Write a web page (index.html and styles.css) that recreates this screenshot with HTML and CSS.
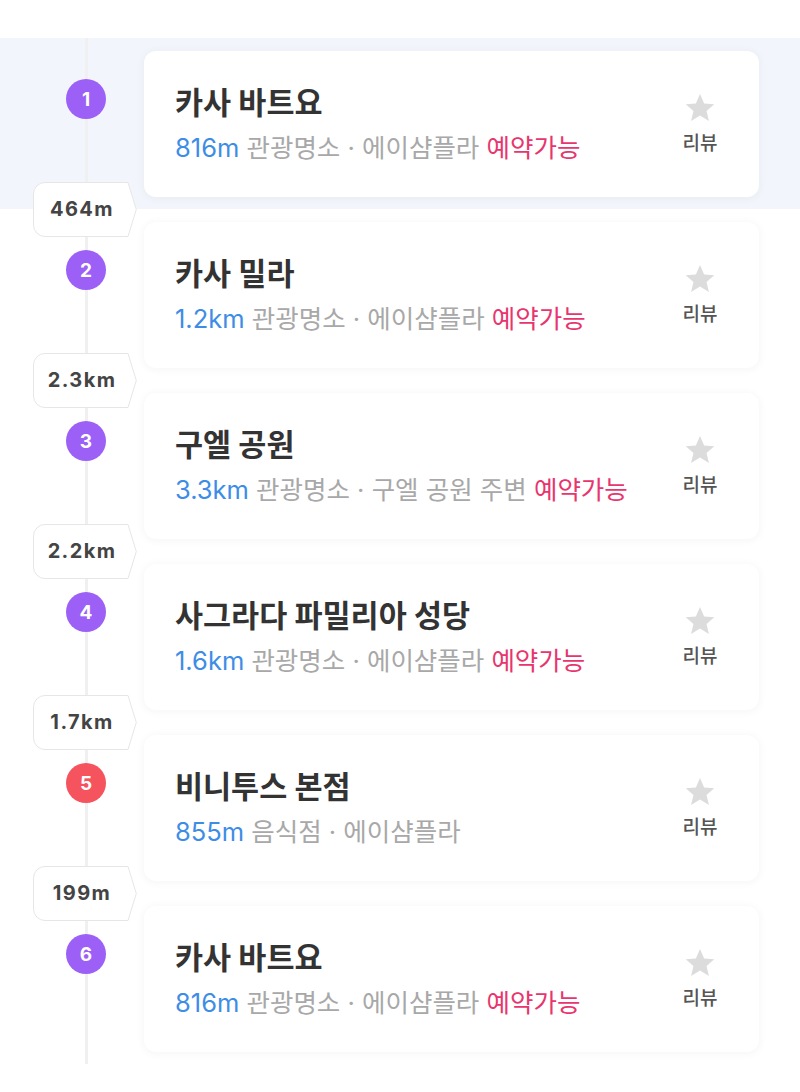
FILE: index.html
```html
<!DOCTYPE html>
<html lang="ko">
<head>
<meta charset="utf-8">
<title>코스</title>
<link rel="stylesheet" href="styles.css">
</head>
<body>
<div class="timeline">
  <div class="stop active">
    <div class="rail"><span class="num purple">1</span></div>
    <div class="card">
      <div class="info">
        <div class="title">카사 바트요</div>
        <div class="meta"><span class="dist">816m</span> 관광명소 · 에이샴플라 <span class="book">예약가능</span></div>
      </div>
      <div class="review"><svg class="star" viewBox="0 0 24 24"><path d="M12 1.5l3.1 7.1 7.6.6-5.8 5 1.8 7.5L12 17.7l-6.7 4 1.8-7.5-5.8-5 7.6-.6z"/></svg><span>리뷰</span></div>
    </div>
  </div>
  <div class="leg"><div class="pill"><svg viewBox="0 0 104 55" preserveAspectRatio="none"><path d="M12 .5H95L103.3 27.5 95 54.5H12A11.5 11.5 0 0 1 .5 43V12A11.5 11.5 0 0 1 12 .5Z"/></svg><span>464m</span></div></div>
  <div class="stop">
    <div class="rail"><span class="num purple">2</span></div>
    <div class="card">
      <div class="info">
        <div class="title">카사 밀라</div>
        <div class="meta"><span class="dist">1.2km</span> 관광명소 · 에이샴플라 <span class="book">예약가능</span></div>
      </div>
      <div class="review"><svg class="star" viewBox="0 0 24 24"><path d="M12 1.5l3.1 7.1 7.6.6-5.8 5 1.8 7.5L12 17.7l-6.7 4 1.8-7.5-5.8-5 7.6-.6z"/></svg><span>리뷰</span></div>
    </div>
  </div>
  <div class="leg"><div class="pill"><svg viewBox="0 0 104 55" preserveAspectRatio="none"><path d="M12 .5H95L103.3 27.5 95 54.5H12A11.5 11.5 0 0 1 .5 43V12A11.5 11.5 0 0 1 12 .5Z"/></svg><span>2.3km</span></div></div>
  <div class="stop">
    <div class="rail"><span class="num purple">3</span></div>
    <div class="card">
      <div class="info">
        <div class="title">구엘 공원</div>
        <div class="meta"><span class="dist">3.3km</span> 관광명소 · 구엘 공원 주변 <span class="book">예약가능</span></div>
      </div>
      <div class="review"><svg class="star" viewBox="0 0 24 24"><path d="M12 1.5l3.1 7.1 7.6.6-5.8 5 1.8 7.5L12 17.7l-6.7 4 1.8-7.5-5.8-5 7.6-.6z"/></svg><span>리뷰</span></div>
    </div>
  </div>
  <div class="leg"><div class="pill"><svg viewBox="0 0 104 55" preserveAspectRatio="none"><path d="M12 .5H95L103.3 27.5 95 54.5H12A11.5 11.5 0 0 1 .5 43V12A11.5 11.5 0 0 1 12 .5Z"/></svg><span>2.2km</span></div></div>
  <div class="stop">
    <div class="rail"><span class="num purple">4</span></div>
    <div class="card">
      <div class="info">
        <div class="title">사그라다 파밀리아 성당</div>
        <div class="meta"><span class="dist">1.6km</span> 관광명소 · 에이샴플라 <span class="book">예약가능</span></div>
      </div>
      <div class="review"><svg class="star" viewBox="0 0 24 24"><path d="M12 1.5l3.1 7.1 7.6.6-5.8 5 1.8 7.5L12 17.7l-6.7 4 1.8-7.5-5.8-5 7.6-.6z"/></svg><span>리뷰</span></div>
    </div>
  </div>
  <div class="leg"><div class="pill"><svg viewBox="0 0 104 55" preserveAspectRatio="none"><path d="M12 .5H95L103.3 27.5 95 54.5H12A11.5 11.5 0 0 1 .5 43V12A11.5 11.5 0 0 1 12 .5Z"/></svg><span>1.7km</span></div></div>
  <div class="stop">
    <div class="rail"><span class="num red">5</span></div>
    <div class="card">
      <div class="info">
        <div class="title">비니투스 본점</div>
        <div class="meta"><span class="dist">855m</span> 음식점 · 에이샴플라</div>
      </div>
      <div class="review"><svg class="star" viewBox="0 0 24 24"><path d="M12 1.5l3.1 7.1 7.6.6-5.8 5 1.8 7.5L12 17.7l-6.7 4 1.8-7.5-5.8-5 7.6-.6z"/></svg><span>리뷰</span></div>
    </div>
  </div>
  <div class="leg"><div class="pill"><svg viewBox="0 0 104 55" preserveAspectRatio="none"><path d="M12 .5H95L103.3 27.5 95 54.5H12A11.5 11.5 0 0 1 .5 43V12A11.5 11.5 0 0 1 12 .5Z"/></svg><span>199m</span></div></div>
  <div class="stop">
    <div class="rail"><span class="num purple">6</span></div>
    <div class="card">
      <div class="info">
        <div class="title">카사 바트요</div>
        <div class="meta"><span class="dist">816m</span> 관광명소 · 에이샴플라 <span class="book">예약가능</span></div>
      </div>
      <div class="review"><svg class="star" viewBox="0 0 24 24"><path d="M12 1.5l3.1 7.1 7.6.6-5.8 5 1.8 7.5L12 17.7l-6.7 4 1.8-7.5-5.8-5 7.6-.6z"/></svg><span>리뷰</span></div>
    </div>
  </div>
</div>
</body>
</html>
```
FILE: styles.css
```css
* { box-sizing: border-box; }
html, body { margin: 0; padding: 0; background: #fff; }
body {
  font-family: Inter, "Noto Sans CJK KR", "Noto Sans", sans-serif;
  color: #333;
}
.timeline {
  position: relative;
  margin-top: 38px;
  display: flex;
  flex-direction: column;
}
.timeline::before {
  content: "";
  position: absolute;
  left: 84.5px;
  top: 0;
  bottom: 0;
  width: 3px;
  background: #f0f0f2;
  z-index: 1;
}
.stop {
  display: flex;
  align-items: stretch;
  padding: 12.5px 41px 12.5px 0;
}
.stop.active { background: #f3f5fc; }
.rail {
  width: 144px;
  flex: none;
  padding-top: 28.5px;
  position: relative;
  z-index: 2;
}
.num {
  display: flex;
  align-items: center;
  justify-content: center;
  width: 40px;
  height: 40px;
  margin-left: 66px;
  border-radius: 50%;
  color: #fff;
  font-size: 19px;
  font-weight: 700;
  line-height: 1;
}
.num.purple { background: #9c60f6; }
.num.red { background: #f5535d; }
.card {
  flex: 1;
  height: 146px;
  background: #fff;
  border-radius: 12px;
  box-shadow: 0 1px 10px rgba(30, 40, 80, 0.05);
  display: flex;
  align-items: center;
  padding: 0 38px 0 31px;
}
.info { flex: 1; }
.title {
  font-size: 30.5px;
  font-weight: 700;
  line-height: 36px;
  color: #333;
  margin-bottom: 11px;
}
.meta {
  font-size: 25.5px;
  line-height: 31px;
  color: #a8a8a8;
  white-space: nowrap;
}
.meta .dist { color: #3d8de6; }
.meta .book { color: #e8356e; }
.review {
  display: flex;
  flex-direction: column;
  align-items: center;
  gap: 9px;
  width: 42px;
}
.star { width: 32px; height: 32px; fill: #dcdcdc; }
.review span {
  font-size: 19px;
  line-height: 22px;
  color: #555;
  font-weight: 500;
}
.leg {
  height: 0;
  display: flex;
  align-items: center;
  padding-left: 33px;
  position: relative;
  z-index: 3;
}
.pill {
  position: relative;
  flex: none;
  width: 104px;
  height: 55px;
  display: flex;
  align-items: center;
  padding-left: 8px;
  padding-right: 14px;
  justify-content: center;
}
.pill svg {
  position: absolute;
  inset: 0;
  width: 100%;
  height: 100%;
}
.pill path { fill: #fff; stroke: #e6e6e6; stroke-width: 1; }
.pill span {
  position: relative;
  font-size: 20px;
  font-weight: 700;
  color: #444;
  letter-spacing: 1.4px;
}
```
